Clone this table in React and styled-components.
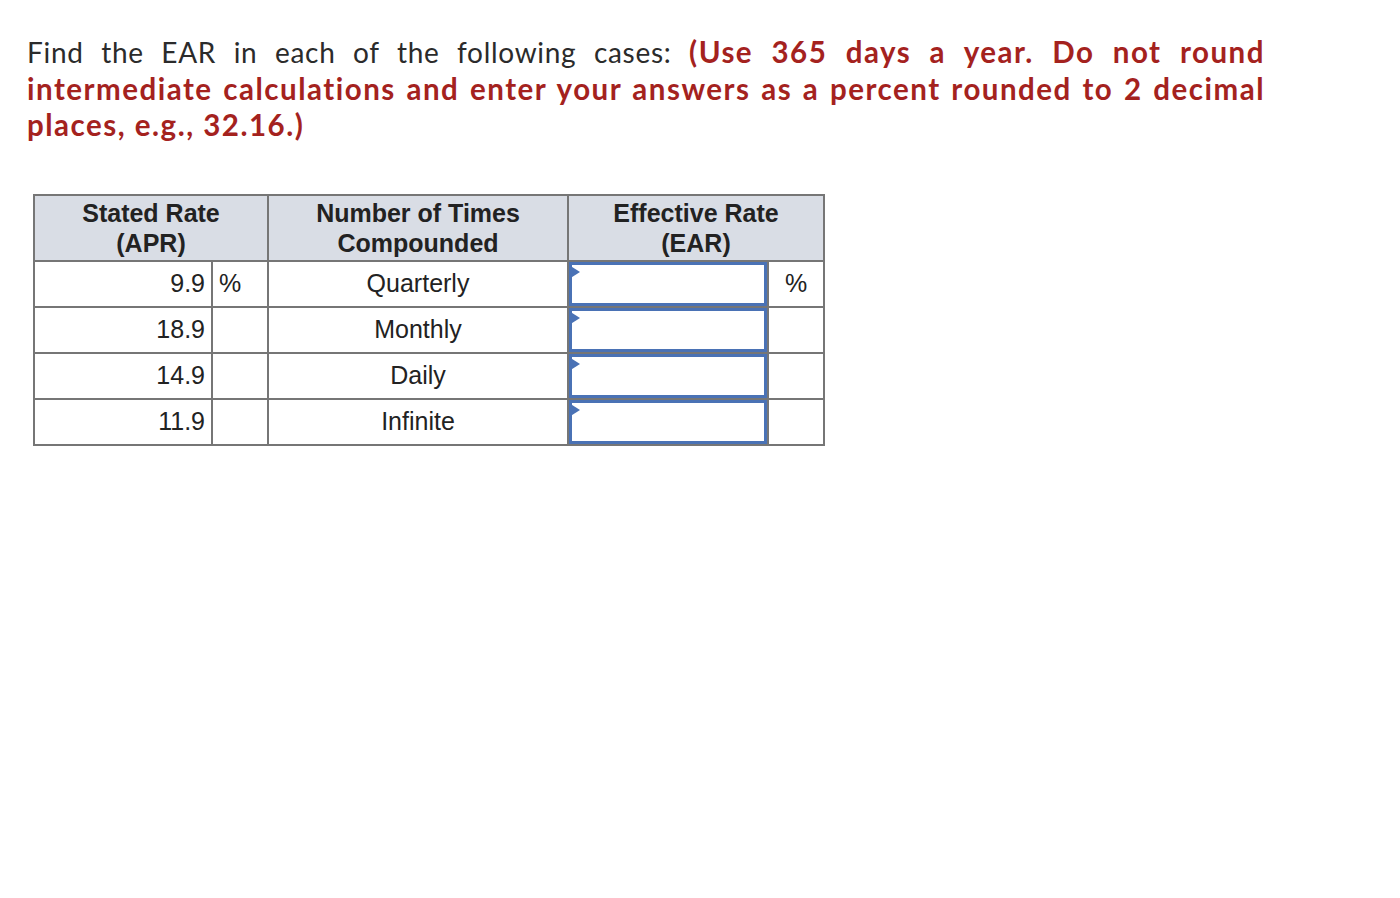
import React from 'react';
import styled, { createGlobalStyle } from 'styled-components';

const GlobalStyle = createGlobalStyle`
  body {
    margin: 0;
    background: #fff;
    font-family: Lato, "Open Sans", sans-serif;
  }
`;

const Page = styled.div`
  padding: 34px 0 0 27px;
`;

const Prompt = styled.p`
  width: 1238px;
  margin: 0;
  font-size: 28px;
  line-height: 36.5px;
  color: #2b2b2b;
  text-align: justify;
  letter-spacing: 0.7px;
`;

const Note = styled.span`
  color: #a4221e;
  font-weight: 700;
  font-size: 29.5px;
  letter-spacing: 1.5px;
`;

const Table = styled.table`
  margin: 50px 0 0 6px;
  width: 790px;
  table-layout: fixed;
  border-collapse: collapse;
  font-family: "Liberation Sans", Arial, sans-serif;
  font-size: 25px;
  color: #222;
`;

const Head = styled.th`
  background: #d9dde5;
  border: 2px solid #767676;
  font-weight: 700;
  line-height: 30px;
  height: 62px;
  padding: 2px 0 0;
  vertical-align: top;
`;

const Cell = styled.td`
  border: 2px solid #767676;
  height: 44px;
  padding: 0 6px;
  text-align: ${(p) => p.$align || 'center'};
  box-sizing: border-box;
  white-space: nowrap;
`;

const InputCell = styled.td`
  border: 2px solid #767676;
  padding: 0;
  height: 44px;
`;

const Field = styled.div`
  position: relative;
  height: 44px;
  border: 3px solid #4a72b5;
  box-sizing: border-box;
  background: #fff;

  &::before {
    content: '';
    position: absolute;
    left: -3px;
    top: 0;
    width: 0;
    height: 0;
    border-top: 7px solid transparent;
    border-bottom: 7px solid transparent;
    border-left: 11px solid #4a72b5;
  }
`;

const rows = [
  { apr: '9.9', pct: true, freq: 'Quarterly' },
  { apr: '18.9', freq: 'Monthly' },
  { apr: '14.9', freq: 'Daily' },
  { apr: '11.9', freq: 'Infinite' },
];

export default function App() {
  return (
    <Page>
      <GlobalStyle />
      <Prompt>
        Find the EAR in each of the following cases:{' '}
        <Note>
          (Use 365 days a year. Do not round intermediate calculations and enter
          your answers as a percent rounded to 2 decimal places, e.g., 32.16.)
        </Note>
      </Prompt>
      <Table>
        <colgroup>
          <col style={{ width: 178 }} />
          <col style={{ width: 56 }} />
          <col style={{ width: 300 }} />
          <col style={{ width: 200 }} />
          <col style={{ width: 56 }} />
        </colgroup>
        <thead>
          <tr>
            <Head colSpan={2}>
              Stated Rate
              <br />
              (APR)
            </Head>
            <Head>
              Number of Times
              <br />
              Compounded
            </Head>
            <Head colSpan={2}>
              Effective Rate
              <br />
              (EAR)
            </Head>
          </tr>
        </thead>
        <tbody>
          {rows.map((r) => (
            <tr key={r.apr}>
              <Cell $align="right">{r.apr}</Cell>
              <Cell $align="left">{r.pct ? '%' : ''}</Cell>
              <Cell>{r.freq}</Cell>
              <InputCell>
                <Field />
              </InputCell>
              <Cell>{r.pct ? '%' : ''}</Cell>
            </tr>
          ))}
        </tbody>
      </Table>
    </Page>
  );
}
